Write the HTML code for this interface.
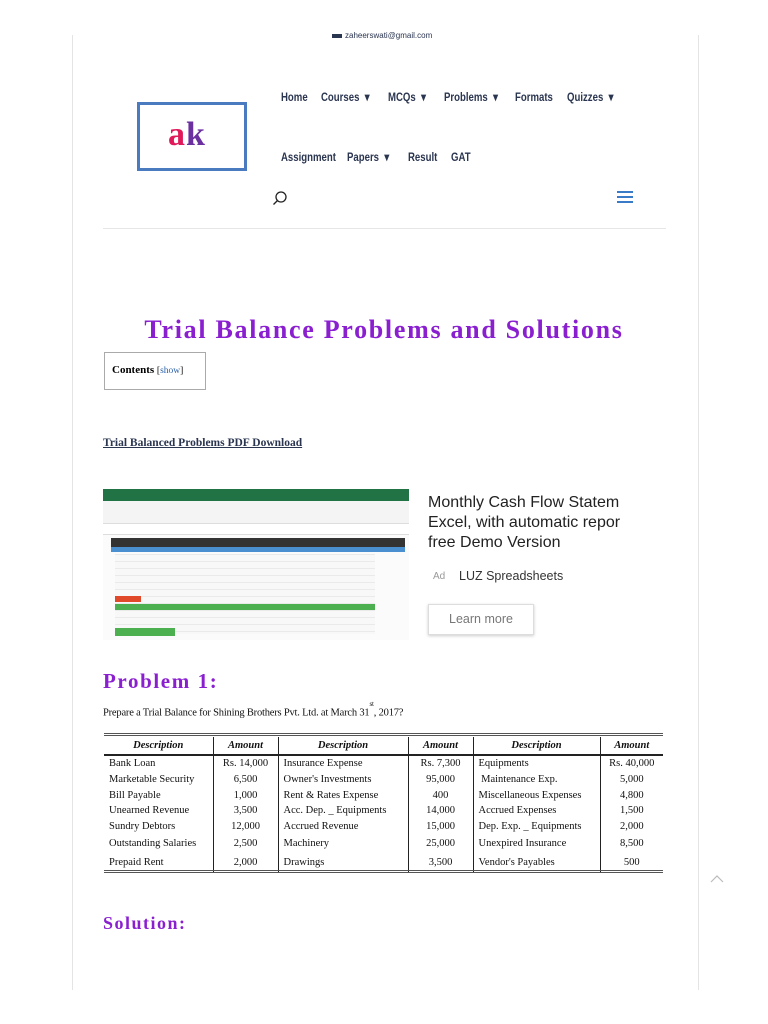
<!DOCTYPE html>
<html><head><meta charset="utf-8"><style>
body{margin:0;width:768px;height:1024px;background:#fff;position:relative;overflow:hidden;font-family:"Liberation Sans",sans-serif}
.a{position:absolute}
.nav{position:absolute;font-family:"Liberation Sans Narrow","Liberation Sans",sans-serif;font-size:12px;font-weight:bold;color:#2a3550;transform:scaleX(.8);transform-origin:left}
.ser{font-family:"Liberation Serif",serif}
table{border-collapse:collapse;table-layout:fixed;font-family:"Liberation Serif",serif;font-size:10.5px;color:#111}
td{border-right:1px solid #222;padding:0 5px;height:15.7px;white-space:nowrap;overflow:hidden}
td:last-child{border-right:none}
th{font-style:italic;font-weight:bold;border-right:1px solid #222;border-bottom:2px solid #222;height:15px;font-size:10.5px}
th:last-child{border-right:none}
.c{text-align:center}
</style></head><body>
<div class="a" style="left:72px;top:35px;width:1px;height:955px;background:#e4e4e4"></div>
<div class="a" style="left:698px;top:35px;width:1px;height:955px;background:#e4e4e4"></div>
<div class="a" style="left:332px;top:34px;width:10px;height:4px;background:#2a3550"></div>
<div class="a" style="left:345px;top:31px;font-size:8px;color:#2a3550">zaheerswati@gmail.com</div>
<div class="a" style="left:137px;top:102px;width:104px;height:63px;border:3px solid #4a7bc0"></div>
<div class="a ser" style="left:168px;top:116px;font-size:34px;font-weight:bold;letter-spacing:1px"><span style="color:#e0195a">a</span><span style="color:#6b2fa0">k</span></div>
<div class="nav" style="left:281px;top:90px">Home</div>
<div class="nav" style="left:321px;top:90px">Courses &nbsp;▾</div>
<div class="nav" style="left:388px;top:90px">MCQs &nbsp;▾</div>
<div class="nav" style="left:444px;top:90px">Problems &nbsp;▾</div>
<div class="nav" style="left:515px;top:90px">Formats</div>
<div class="nav" style="left:567px;top:90px">Quizzes &nbsp;▾</div>
<div class="nav" style="left:281px;top:150px">Assignment</div>
<div class="nav" style="left:347px;top:150px">Papers &nbsp;▾</div>
<div class="nav" style="left:408px;top:150px">Result</div>
<div class="nav" style="left:451px;top:150px">GAT</div>
<svg class="a" style="left:272px;top:190px" width="16" height="16"><circle cx="9" cy="7" r="5" fill="none" stroke="#222" stroke-width="1.3"/><line x1="5.5" y1="10.5" x2="1.5" y2="14.5" stroke="#222" stroke-width="1.3"/></svg>
<div class="a" style="left:617px;top:191px;width:16px;height:2px;background:#3a7bc8;box-shadow:0 5px 0 #3a7bc8,0 10px 0 #3a7bc8"></div>
<div class="a" style="left:103px;top:228px;width:563px;height:1px;background:#e6e6e6"></div>
<div class="a ser" style="left:0;width:768px;top:315px;text-align:center;font-size:26px;font-weight:bold;color:#8a1fd0;letter-spacing:1.7px">Trial Balance Problems and Solutions</div>
<div class="a ser" style="left:104px;top:352px;width:102px;height:38px;border:1px solid #aaa;box-sizing:border-box;font-size:11px;line-height:35px;padding-left:7px"><b>Contents</b> <span style="font-size:9.5px">[<span style="color:#2a5fa8">show</span>]</span></div>
<div class="a ser" style="left:103px;top:437px;font-size:11.5px;font-weight:bold;color:#2a3550;text-decoration:underline">Trial Balanced Problems PDF Download</div>
<div class="a" style="left:103px;top:489px;width:306px;height:151px;background:#fbfbfb;overflow:hidden">
<div style="height:12px;background:#217346"></div>
<div style="height:22px;background:#f4f4f4;border-bottom:1px solid #ddd"></div>
<div style="height:10px;background:#fff;border-bottom:1px solid #ddd"></div>
<div style="margin:3px 0 0 8px;height:9px;background:#333;width:294px"></div>
<div style="margin-left:8px;height:5px;background:#4a90d0;width:294px"></div>
<div style="margin:2px 0 0 12px;width:260px;height:80px;background:repeating-linear-gradient(#eaeaea 0 1px,#f8f8f8 1px 7px)">
<div style="position:relative;top:42px;left:0;width:26px;height:6px;background:#e04a2a"></div>
<div style="position:relative;top:44px;left:0;width:260px;height:6px;background:#4caf50"></div>
<div style="position:relative;top:62px;left:0;width:60px;height:8px;background:#4caf50"></div>
</div></div>
<div class="a" style="left:428px;top:493px;font-size:16px;line-height:20px;color:#222;width:210px;white-space:nowrap;overflow:hidden">Monthly Cash Flow Statem<br>Excel, with automatic repor<br>free Demo Version</div>
<div class="a" style="left:433px;top:571px;font-size:10px;color:#999">Ad</div>
<div class="a" style="left:459px;top:569px;font-size:12.5px;color:#333">LUZ Spreadsheets</div>
<div class="a" style="left:428px;top:604px;width:106px;height:31px;border:1px solid #ddd;box-shadow:0 1px 3px rgba(0,0,0,.2);box-sizing:border-box;font-size:12.5px;color:#777;line-height:29px;text-align:center">Learn more</div>
<div class="a ser" style="left:103px;top:669px;font-size:21px;font-weight:bold;color:#8a1fd0;letter-spacing:1.6px">Problem 1:</div>
<div class="a ser" style="left:103px;top:705px;font-size:10.5px;color:#111;letter-spacing:-.2px">Prepare a Trial Balance for Shining Brothers Pvt. Ltd. at March 31<sup style="font-size:7px;position:relative;top:-5px">st</sup>, 2017?</div>
<div class="a" style="left:104px;top:733px;width:559px;border-top:3px double #555"></div>
<table class="a" style="left:104px;top:737px;width:559px">
<colgroup><col style="width:109px"><col style="width:65px"><col style="width:130px"><col style="width:65px"><col style="width:127px"><col></colgroup>
<tr><th>Description</th><th>Amount</th><th>Description</th><th>Amount</th><th>Description</th><th>Amount</th></tr>
<tr><td>Bank Loan</td><td class="c">Rs. 14,000</td><td>Insurance Expense</td><td class="c">Rs. 7,300</td><td>Equipments</td><td class="c">Rs. 40,000</td></tr>
<tr><td>Marketable Security</td><td class="c">6,500</td><td>Owner's Investments</td><td class="c">95,000</td><td>&nbsp;Maintenance Exp.</td><td class="c">5,000</td></tr>
<tr><td>Bill Payable</td><td class="c">1,000</td><td>Rent &amp; Rates Expense</td><td class="c">400</td><td>Miscellaneous Expenses</td><td class="c">4,800</td></tr>
<tr><td>Unearned Revenue</td><td class="c">3,500</td><td>Acc. Dep. _ Equipments</td><td class="c">14,000</td><td>Accrued Expenses</td><td class="c">1,500</td></tr>
<tr><td>Sundry Debtors</td><td class="c">12,000</td><td>Accrued Revenue</td><td class="c">15,000</td><td>Dep. Exp. _ Equipments</td><td class="c">2,000</td></tr>
<tr><td style="height:19px">Outstanding Salaries</td><td class="c">2,500</td><td>Machinery</td><td class="c">25,000</td><td>Unexpired Insurance</td><td class="c">8,500</td></tr>
<tr><td style="height:19px">Prepaid Rent</td><td class="c">2,000</td><td>Drawings</td><td class="c">3,500</td><td>Vendor's Payables</td><td class="c">500</td></tr>
</table>
<div class="a" style="left:104px;top:870px;width:559px;border-top:3px double #555"></div>
<svg class="a" style="left:710px;top:874px" width="14" height="10"><polyline points="1,8 7,2 13,8" fill="none" stroke="#bbb" stroke-width="1.2"/></svg>
<div class="a ser" style="left:103px;top:913px;font-size:18px;font-weight:bold;color:#8a1fd0;letter-spacing:1.5px">Solution:</div>
</body></html>
